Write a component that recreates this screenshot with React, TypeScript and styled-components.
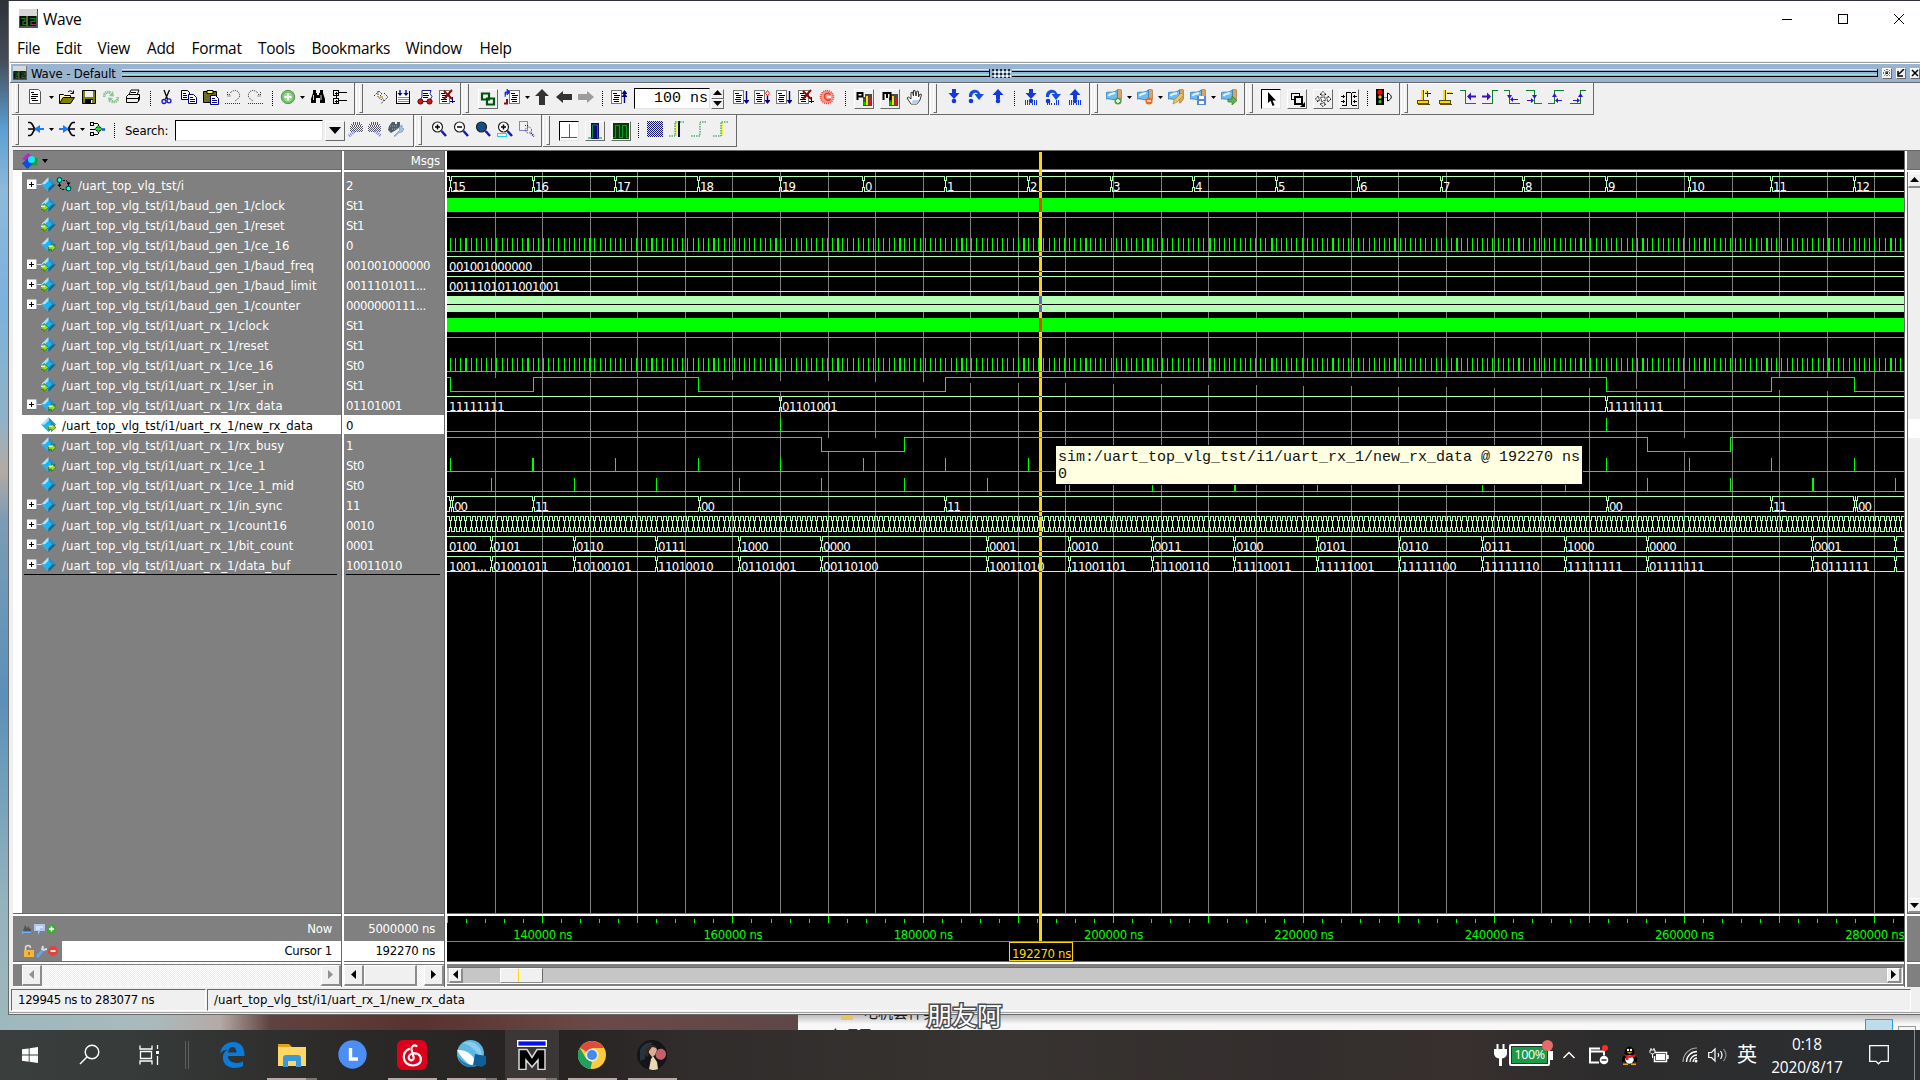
import { Fragment } from 'react'
import type { ReactNode } from 'react'
import styled, { createGlobalStyle, css } from 'styled-components'

const UI = `'DejaVu Sans Condensed', 'DejaVu Sans', sans-serif`
const SEGOE = `'Open Sans', 'Noto Sans', 'Noto Sans CJK SC', sans-serif`
const MONO = `'Liberation Mono', monospace`

const GlobalStyle = createGlobalStyle`
  * { box-sizing: border-box; }
  body { margin: 0; overflow: hidden; background: #2c2a29; }
  svg { display: block; flex: none; }
`

/* ---------- shell ---------- */

const Desktop = styled.div`
  width: 1920px;
  height: 1080px;
  display: flex;
  flex-direction: column;
  position: relative;
  overflow: hidden;
  background: linear-gradient(180deg, #2d3138 0, #454d5a 60px, #5d9fd2 130px, #8fb9da 190px, #7db2dc 300px, #8fb2c8 420px, #b5aaa4 470px, #7b9cb5 520px, #5c90b8 700px, #93b3bd 900px, #9db8bc 1014px);
`

const WindowFrame = styled.div`
  margin: 1px 0 0 8px;
  height: 1014px;
  flex: none;
  display: flex;
  flex-direction: column;
  background: #f0f0f0;
  border-left: 1px solid #696969;
  border-bottom: 1px solid #696969;
`

const TitleBar = styled.div`
  height: 35px;
  flex: none;
  display: flex;
  align-items: center;
  background: #fff;
  padding: 0 16px 0 10px;
  font: 15.5px ${SEGOE};
  letter-spacing: -0.2px;
  color: #000;
`

const TitleText = styled.span`
  margin-left: 5px;
  flex: 1;
`

const CaptionButtons = styled.div`
  display: flex;
  gap: 46px;
`

const MenuBar = styled.div`
  height: 25px;
  flex: none;
  display: flex;
  align-items: center;
  background: #fff;
  padding: 0 0 1px 8px;
  font: 15.4px ${SEGOE};
  letter-spacing: -0.28px;
`

const MenuItem = styled.span<{ $w: number }>`
  width: ${({ $w }) => $w}px;
  white-space: nowrap;
`

const DockBar = styled.div`
  height: 21px;
  flex: none;
  margin: 1px 0 0 1px;
  border-top: 1px solid #a0a0a0;
  border-bottom: 1px solid #696969;
  box-shadow: inset 0 1px #fff, inset 1px 0 #fff;
  background: #99b4d1;
  display: flex;
  align-items: center;
  padding: 1px 0 0 3px;
  font: 13px ${UI};
  letter-spacing: -0.12px;
`

const DockTitle = styled.span`
  margin: 0 6px 0 4px;
  width: 85px;
  white-space: nowrap;
`

const DockRail = styled.div<{ $w: number }>`
  width: ${({ $w }) => $w}px;
  height: 8px;
  border-right: 1px solid #000;
  background: linear-gradient(180deg, #c8f0f8 0 1px, #99b4d1 1px 2px, #000 2px 3px, #99b4d1 3px 5px, #a8dce8 5px 6px, #99b4d1 6px 7px, #000 7px 8px);
`

const DockGrip = styled.div`
  width: 19px;
  height: 9px;
  margin: 0 1px 0 2px;
  background-image: radial-gradient(circle at 1px 1px, #223 0.7px, transparent 0.9px), radial-gradient(circle at 3px 3px, #fff 0.7px, transparent 0.9px);
  background-size: 4px 4px;
`

const DockButtons = styled.div`
  display: flex;
  gap: 4px;
  margin-left: 4px;
`

const MiniButton = styled.div`
  width: 10px;
  height: 11px;
  flex: none;
  background: #f0f0f0;
  border: 1px solid #fff;
  border-right-color: #696969;
  border-bottom-color: #696969;
  display: flex;
  align-items: center;
  justify-content: center;
`

/* ---------- toolbars ---------- */

const ToolRow = styled.div`
  height: 32px;
  flex: none;
  display: flex;
  gap: 1px;
  padding-left: 3px;
`

const ToolGroup = styled.div<{ $w: number; $pad: number }>`
  width: ${({ $w }) => $w}px;
  flex: none;
  height: 32px;
  display: flex;
  align-items: center;
  border-right: 1px solid #696969;
  border-bottom: 1px solid #696969;
  box-shadow: inset 1px 1px #fff;

  &::before {
    content: '';
    flex: none;
    width: 2px;
    height: 28px;
    margin: 0 ${({ $pad }) => $pad}px 0 3px;
    border-left: 1px solid #fff;
    border-right: 1px solid #696969;
    border-bottom: 1px solid #696969;
  }
`

const Slot = styled.div<{ $w?: number }>`
  width: ${({ $w = 22 }) => $w}px;
  height: 16px;
  flex: none;
  margin-bottom: 3px;
  display: flex;
  align-items: center;
  justify-content: center;
`

const Dots = styled.div<{ $w?: number }>`
  width: 1px;
  height: 15px;
  flex: none;
  margin: 0 ${({ $w = 12 }) => ($w - 1) / 2}px;
  background: repeating-linear-gradient(180deg, #000 0 1px, transparent 1px 2px);
`

const PushButton = styled.div<{ $down?: boolean; $gap?: number }>`
  width: 20px;
  height: 20px;
  flex: none;
  margin-right: ${({ $gap = 6 }) => $gap}px;
  display: flex;
  align-items: center;
  justify-content: center;
  border: 1px solid #fff;
  border-right-color: #696969;
  border-bottom-color: #696969;
  ${({ $down }) => $down && css`
    background: #fff;
    border-color: #000 #e3e3e3 #e3e3e3 #000;
  `}
`

const Field = styled.div<{ $w: number }>`
  width: ${({ $w }) => $w}px;
  height: 21px;
  flex: none;
  background: #fff;
  border: 1px solid #000;
  border-right-color: #e3e3e3;
  border-bottom-color: #e3e3e3;
  font: 15px/20px ${MONO};
  text-align: right;
  padding-right: 1px;
`

const Spinner = styled.div`
  display: flex;
  flex-direction: column;
  margin: 0 6px 0 1px;
`

const SpinButton = styled.div`
  width: 13px;
  height: 10px;
  border: 1px solid #fff;
  border-right-color: #696969;
  border-bottom-color: #696969;
  display: flex;
  align-items: center;
  justify-content: center;
`

const SearchLabel = styled.span`
  width: 55px;
  padding-left: 5px;
  font: 13px ${UI};
  letter-spacing: -0.1px;
  white-space: nowrap;
`

/* ---------- panes ---------- */

const Panes = styled.div`
  margin: 3px 0 0 4px;
  height: 837px;
  flex: none;
  display: grid;
  grid-template-columns: 328px 3px 100px 3px 1457px 3px 13px;
  border-top: 1px solid #696969;
`

const Column = styled.div`
  display: flex;
  flex-direction: column;
  position: relative;
  min-width: 0;
`

const VSplit = styled.div`
  border-left: 1px solid #696969;
  background: #fff;
`

const HSplit = styled.div`
  height: 3px;
  flex: none;
  border-top: 1px solid #696969;
  background: #fff;
`

const PaneHeader = styled.div<{ $dark?: boolean }>`
  height: 18px;
  flex: none;
  background: ${({ $dark }) => ($dark ? '#000' : '#808080')};
  color: #fff;
  font: 13px/19px ${UI};
  letter-spacing: -0.1px;
  text-align: right;
  padding-right: 4px;
`

const HeaderIcon = styled.div`
  display: flex;
  align-items: center;
  gap: 4px;
  height: 19px;
  padding-left: 9px;
`

const PaneBody = styled.div<{ $gutter?: boolean; $dark?: boolean }>`
  height: 741px;
  flex: none;
  padding-top: 3px;
  background: ${({ $dark }) => ($dark ? '#000' : '#808080')};
  border-left: ${({ $gutter }) => ($gutter ? '9px solid #fff' : '0')};
  ${({ $dark }) => $dark && 'padding: 0;'}
`

const SignalRow = styled.div<{ $selected?: boolean }>`
  height: 20px;
  display: flex;
  align-items: center;
  background: ${({ $selected }) => ($selected ? '#fff' : 'transparent')};
  background-clip: content-box;
  padding-bottom: 1px;
  color: ${({ $selected }) => ($selected ? '#000' : '#fff')};
  font: 13px/19px ${UI};
  letter-spacing: 0.07px;
  white-space: nowrap;
`

const Expander = styled.div`
  width: 19px;
  height: 18px;
  flex: none;
  display: flex;
  align-items: center;
  padding-left: 5px;
`

const SignalIcon = styled.div`
  width: 15px;
  flex: none;
`

const SignalName = styled.span<{ $indent?: boolean }>`
  margin-left: ${({ $indent }) => ($indent ? 6 : 6)}px;
  padding-top: 1px;
`

const SignalValue = styled.span`
  padding: 1px 0 0 2px;
  letter-spacing: -0.45px;
`

const InsertLine = styled.div<{ $l: number; $r: number }>`
  height: 1px;
  margin: -1px ${({ $r }) => $r}px 0 ${({ $l }) => $l}px;
  background: #000;
`

const Footer = styled.div`
  height: 45px;
  flex: none;
  background: #808080;
  font: 13px ${UI};
  letter-spacing: -0.25px;
`

const FooterRow = styled.div<{ $h: number; $light?: boolean }>`
  height: ${({ $h }) => $h}px;
  display: flex;
  align-items: center;
  color: ${({ $light }) => ($light ? '#000' : '#fff')};
`

const FooterIcons = styled.div`
  width: 49px;
  padding-left: 9px;
  display: flex;
  flex: none;
`

const FooterCell = styled.div<{ $light?: boolean }>`
  flex: 1;
  height: 100%;
  display: flex;
  align-items: center;
  justify-content: flex-end;
  padding: 0 9px 1px 0;
  background: ${({ $light }) => ($light ? '#fff' : 'transparent')};
`

const ScrollStrip = styled.div<{ $l?: number }>`
  height: 23px;
  flex: none;
  display: flex;
  align-items: center;
  background: #808080;
  border-bottom: 1px solid #fff;
  padding-left: ${({ $l = 0 }) => $l}px;
`

const Trough = styled.div`
  flex: 1;
  height: 21px;
  background: repeating-conic-gradient(#fff 0 25%, #ececec 0 50%) 0 0 / 2px 2px;
`

const ScrollButton = styled.div<{ $w?: number; $h?: number }>`
  width: ${({ $w = 20 }) => $w}px;
  height: ${({ $h = 21 }) => $h}px;
  flex: none;
  background: #f0f0f0;
  border: 1px solid #fff;
  border-right: 2px solid #8c8c8c;
  border-bottom: 2px solid #8c8c8c;
  display: flex;
  align-items: center;
  justify-content: center;
`

const WaveTrough = styled.div`
  flex: 1;
  height: 17px;
  margin: 0 1px 0 0;
  border-top: 1px solid #696969;
  border-bottom: 1px solid #fff;
  border-right: 1px solid #fff;
  background: #c6c6c6;
  display: flex;
  align-items: center;
  padding: 0 1px 0 2px;
`

const WaveThumb = styled.div`
  width: 43px;
  height: 15px;
  margin: 0 auto 0 37px;
  background: #f0f0f0;
  border: 1px solid #fff;
  border-right-color: #696969;
  border-bottom-color: #8c8c8c;
  display: flex;
  padding-left: 17px;

  &::before {
    content: '';
    width: 1px;
    background: #ffd700;
  }
`

const CursorLine = styled.div`
  position: absolute;
  left: 592px;
  top: 1px;
  width: 3px;
  height: 789px;
  background: #ffd700;
`

const Crossing = styled.i<{ $top: number; $h: number; $c: string }>`
  position: absolute;
  left: 0;
  top: ${({ $top }) => $top}px;
  width: 3px;
  height: ${({ $h }) => $h}px;
  background: ${({ $c }) => $c};
`

const Tooltip = styled.div`
  position: absolute;
  left: 608px;
  top: 294px;
  width: 528px;
  height: 40px;
  border: 1px solid #000;
  background: #ffffe1;
  padding: 3px 0 0 2px;
  font: 15px/17px ${MONO};
  white-space: pre;
  color: #111;
`

const SideScroll = styled.div`
  height: 741px;
  flex: none;
  background: #efefef;
  border-left: 1px solid #696969;
  display: flex;
  flex-direction: column;
  justify-content: space-between;
  padding-top: 1px;
`

const SideThumb = styled.div`
  height: 19px;
  margin-bottom: 230px;
  background: #fff;
`

const SideBlock = styled.div<{ $h: number }>`
  height: ${({ $h }) => $h}px;
  flex: none;
  background: #808080;
`

const StatusBar = styled.div`
  height: 22px;
  flex: none;
  margin: 2px 0 0 2px;
  display: flex;
  gap: 1px;
  font: 13px ${UI};
`

const StatusCell = styled.div<{ $w: number; $track: number }>`
  width: ${({ $w }) => $w}px;
  display: flex;
  align-items: center;
  padding: 0 0 1px 6px;
  letter-spacing: ${({ $track }) => $track}px;
  border-top: 1px solid #696969;
  border-left: 1px solid #696969;
  border-right: 1px solid #fff;
  border-bottom: 1px solid #fff;
`

const FrameEdge = styled.div`
  height: 1px;
  margin-top: auto;
  margin-bottom: 1px;
  background: #a0a0a0;
`

/* ---------- behind the window, taskbar ---------- */

const Backdrop = styled.div`
  height: 15px;
  flex: none;
  display: flex;
  justify-content: flex-end;
  background: linear-gradient(90deg, #9db8bc 0, #a9babc 150px, #b5aaa6 220px, #5e4340 270px, #58332f 420px, #6a4a48 600px, #5d4747 798px);
`

const Explorer = styled.div`
  width: 1122px;
  height: 15px;
  overflow: hidden;
  background: linear-gradient(180deg, #bdbdbd, #f8f8f8 9px);
  position: relative;
  font: 15px/20px 'Noto Sans CJK SC', sans-serif;
  color: #1a1a1a;
`

const ExplorerFile = styled.div`
  height: 5px;
  padding-left: 43px;
  display: flex;
  align-items: flex-end;
  gap: 10px;
  overflow: hidden;
  line-height: 17px;
  white-space: nowrap;
`

const FileFolder = styled.div`
  width: 12px;
  height: 5px;
  background: #e8c36a;
`

const ExplorerStatus = styled.div`
  margin-top: 6px;
  padding-left: 18px;
  color: #1e395b;
  height: 6px;
  line-height: 18px;
`

const ViewSwitch = styled.div<{ $right: number; $w: number; $on?: boolean }>`
  position: absolute;
  right: ${({ $right }) => $right}px;
  top: ${({ $on }) => ($on ? 4 : 11)}px;
  width: ${({ $w }) => $w}px;
  height: 20px;
  background: ${({ $on }) => ($on ? '#c0dcea' : '#f4f4f4')};
  border: 1px solid ${({ $on }) => ($on ? '#26a0da' : '#999')};
`

const Subtitle = styled.div`
  position: absolute;
  left: 927px;
  top: 996px;
  font: 400 25px/36px 'Noto Sans CJK SC', sans-serif;
  color: #fff;
  -webkit-text-stroke: 3px #4c4c50;
  paint-order: stroke fill;
  white-space: nowrap;
`

const Taskbar = styled.div`
  height: 50px;
  flex: none;
  display: flex;
  justify-content: space-between;
  background: linear-gradient(90deg, #3a3e3d 0, #363a38 140px, #2b2a29 340px, #262322 560px, #2f2c2b 680px, #373331 1000px, #332e2d 1300px, #37302f 1460px, #2d2c2c 1600px, #2a2e31 1920px);
`

const TaskSide = styled.div`
  display: flex;
`

const TaskButton = styled.div<{ $w?: number; $active?: boolean }>`
  width: ${({ $w = 60 }) => $w}px;
  display: flex;
  flex-direction: column;
  align-items: center;
  justify-content: space-between;
  background: ${({ $active }) => ($active ? '#3a3736' : 'transparent')};
  background-clip: padding-box;
  border: 0 solid transparent;
  border-width: 0 3px;
`

const TaskIcon = styled.div`
  height: 48px;
  display: flex;
  align-items: center;
  padding-top: 1px;
`

const Running = styled.div<{ $stack?: boolean }>`
  height: 2px;
  width: ${({ $stack }) => ($stack ? 50 : 49)}px;
  background: ${({ $stack }) => ($stack ? 'linear-gradient(90deg, #b5aaa7 0 39px, #7c7472 39px)' : '#b5aaa7')};
`

const Divider = styled.div`
  width: 4px;
  height: 28px;
  margin: 11px 13px 0 6px;
  border: 1px solid #5d5f5f;
  border-width: 0 1px;
`

const TrayIcon = styled.div<{ $w: number }>`
  width: ${({ $w }) => $w}px;
  display: flex;
  align-items: center;
  justify-content: center;
  height: 50px;
`

const BatterySlot = styled(TrayIcon)`
  justify-content: flex-start;
  padding-left: 2px;
`

const ImeLabel = styled(TrayIcon)`
  font: 20px/1 'Noto Sans CJK SC', sans-serif;
  color: #fff;
  padding-bottom: 3px;
`

const Clock = styled.div`
  width: 94px;
  padding: 3px 0 0;
  text-align: center;
  color: #fff;
  font: 15.4px/23px ${SEGOE};
  letter-spacing: -0.15px;
`

const ShowDesktop = styled.div`
  width: 6px;
  margin-left: 10px;
  border-left: 1px solid #8a8a8a;
`

/* ---------- icons ---------- */

const Icon = ({ w = 16, h = 16, box, children }: { w?: number; h?: number; box?: string; children: ReactNode }) => (
  <svg width={w} height={h} viewBox={box ?? `0 0 ${w} ${h}`} fill="none">{children}</svg>
)

const Px = ({ d, c = '#000' }: { d: string; c?: string }) => (
  <path d={d} stroke={c} strokeWidth="1" shapeRendering="crispEdges" />
)

const Tri = ({ dir, c = '#000' }: { dir: 'up' | 'down' | 'left' | 'right'; c?: string }) => {
  const d = { up: 'M0 6h9L4.500 1z', down: 'M0 2h9L4.500 7z', left: 'M7 0v9L2 4.500z', right: 'M2 0v9L7 4.500z' }[dir]
  return <Icon w={9} h={9}><path d={d} fill={c} /></Icon>
}

const Caret = ({ w = 10 }: { w?: number }) => (
  <Slot $w={w}><Icon w={5} h={4}><path d="M0 1h5L2.500 4z" fill="#000" /></Icon></Slot>
)

const AppLogo = ({ s = 19 }: { s?: number }) => (
  <Icon w={s} h={s} box="0 0 19 19">
    <path d="M0 0h19v19H0z" fill="#555" />
    <path d="M0 0h18v7H0z" fill="#d8d8d8" />
    <path d="M1 7h16v10H1z" fill="#04100a" />
    <path d="M2 9.500h4v3h-2v3h3M11 9.500h5v3h-4v3h5" stroke="#14801f" strokeWidth="1.200" />
    <path d="M8 7v10" stroke="#b8b83c" />
    <path d="M12 15.500h4" stroke="#b03050" />
  </Icon>
)

const Doc = ({ x = 0 }: { x?: number }) => (
  <g transform={`translate(${x} 0)`} shapeRendering="crispEdges">
    <path d="M.5 1.500h10v13H.5z" fill="#fff" stroke="#777" />
    <path d="M2 4.500h4M3 6.500h6M3 8.500h5M2 10.500h6M3 12.500h5" stroke="#000" />
  </g>
)

const NewIcon = () => (
  <Icon>
    <path d="M2.500.500h9l2 2v12h-11z" fill="#fff" stroke="#555" />
    <Px d="M4 3.500h3M5 5.500h6M4 7.500h7M4 9.500h5M5 11.500h6" />
  </Icon>
)
const OpenIcon = () => (
  <Icon>
    <path d="M.5 14V5.500h4l1 1h6V9" fill="#ffff9a" stroke="#000" />
    <path d="M.5 14.500l3.500-6h11.500l-4 6z" fill="#808000" stroke="#000" />
    <path d="M9 3c2-2 4-1 5 1M14.500 1.500V4.500H11.500" stroke="#000" />
  </Icon>
)
const SaveIcon = () => (
  <Icon>
    <path d="M1.500 1.500h13v13h-13z" fill="#808000" stroke="#000" />
    <path d="M4 2h8v6H4z" fill="#efefef" />
    <path d="M4 10h8v4H4z" fill="#000" />
    <path d="M10 11h1.500v3H10z" fill="#fff" />
  </Icon>
)
const RefreshIcon = () => (
  <Icon>
    <g stroke="#8cc792" strokeWidth="3" strokeDasharray="1.500 .5">
      <path d="M1 8c0-4 3-6 7-4M15 8c0 4-3 6-7 4" />
    </g>
    <path d="M6 7l5 .5L10 2zM10 9l-5-.5L6 14z" fill="#8cc792" />
  </Icon>
)
const PrintIcon = () => (
  <Icon>
    <path d="M4 6l2-5h8l-2 5" fill="#fff" stroke="#000" />
    <path d="M1.500 7.500l2-2h11v5l-2 3h-11z" fill="#eee" stroke="#000" />
    <Px d="M6 3.500h5M6 5.500h5M2 9.500h11M3 13.500h8M13.500 8v4" />
  </Icon>
)
const CutIcon = () => (
  <Icon>
    <path d="M5 1l3.500 9M10.500 1L6.500 10" stroke="#000" strokeWidth="1.300" />
    <circle cx="5" cy="12.500" r="2" stroke="#1515d0" strokeWidth="1.300" />
    <circle cx="10" cy="11.800" r="2" stroke="#1515d0" strokeWidth="1.300" />
  </Icon>
)
const CopyIcon = () => (
  <Icon>
    <path d="M.5 1.500h6l2 2v7h-8z" fill="#fff" stroke="#000" />
    <path d="M7.500 5.500h5l3 3v6h-8z" fill="#fff" stroke="#000080" />
    <Px d="M2 4.500h3M2 6.500h4M2 8.500h4" />
    <Px d="M9 8.500h3M9 10.500h5M9 12.500h5" c="#000080" />
  </Icon>
)
const PasteIcon = () => (
  <Icon>
    <path d="M.5 2.500h13v11H.5z" fill="#6b6b28" stroke="#000" />
    <path d="M4 1.500h6v3H4z" fill="#ffff40" stroke="#000" />
    <path d="M7.500 6.500h5l3 3v6h-8z" fill="#fff" stroke="#000080" />
    <Px d="M9 9.500h3M9 11.500h5M9 13.500h5" c="#000080" />
  </Icon>
)
const UndoIcon = ({ flip }: { flip?: boolean }) => (
  <Icon>
    <g transform={flip ? 'translate(16 0) scale(-1 1)' : undefined} stroke="#333" strokeDasharray="1 1">
      <path d="M2.500 3v4h4M4 6C6 1 12 0 14 4s-1 6-4 8M0 14.500h15" />
    </g>
  </Icon>
)
const AddIcon = () => (
  <Icon>
    <circle cx="8" cy="8" r="6.700" fill="#76bf6c" stroke="#4f9a48" />
    <circle cx="8" cy="8" r="4.600" fill="#9bd592" />
    <path d="M8 4.500v7M4.500 8h7" stroke="#fff" strokeWidth="2.200" />
  </Icon>
)
const Binoculars = () => (
  <Icon>
    <path d="M3 1h3v3h1v2h2V4h1V1h3v3l2 6v4h-5V9H6v5H1v-4l2-6z" fill="#000" />
    <path d="M3.500 6v5M11 6v5" stroke="#fff" strokeWidth=".8" />
  </Icon>
)
const FindIcon = ({ next }: { next?: boolean }) => (
  <Icon>
    <g stroke="#55586a" strokeDasharray="1 1" shapeRendering="crispEdges">
      {range(10).map((k) => {
        const inset = [3, 2, 1, 1, 0, 0, 0, 0, 0, 0][k]
        return <path key={k} d={`M${2 + inset + (k % 2)} ${k + 1.500}H${15 - inset}`} />
      })}
    </g>
    <path d={next ? 'M9 10l6 5' : 'M1 15l6-5'} stroke="#6a74f0" strokeWidth="3" strokeDasharray="1 1" />
  </Icon>
)
const TreeIcon = () => (
  <Icon><Px d="M1.500 1.500h5v5h-5zM1.500 9.500h5v5h-5zM3 4.500h3M4.500 3v3M3 12.500h3M4.500 11v3M7 3.500h8M7 11.500h8M4.500 7v2" /></Icon>
)
const CompileIcon = () => (
  <Icon>
    <path d="M1 7l5-5 3 3-2 2 4 4-3 4M11 4l4 4-4 4M5 2v6l4 3" stroke="#333" strokeDasharray="1.500 1" />
    <path d="M7 7h3v2H7z" fill="#c8b878" />
  </Icon>
)
const CompileAllIcon = () => (
  <Icon>
    <path d="M1 5h14v10H1z" fill="#fff" />
    <Px d="M1.500 2v12M14.500 2v12M1 14.500h14" />
    <Px d="M3 8.500h11M3 10.500h11M3 12.500h11" c="#888" />
    <path d="M5 1v5M11 1v5" stroke="#00008b" strokeWidth="1.300" /><path d="M2.500 4h5L5 7zM8.500 4h5L11 7z" fill="#00008b" />
  </Icon>
)
const SimulateIcon = () => (
  <Icon>
    <path d="M5 1.500h9l-1 3 2 3-3 5H3l2-5z" fill="#fff" stroke="#222088" />
    <Px d="M6 4.500h5M6 6.500h6M6 8.500h5" />
    <circle cx="3.500" cy="12.500" r="2.600" fill="#d01818" stroke="#600" /><circle cx="12.500" cy="12.500" r="2.600" fill="#d01818" stroke="#600" />
  </Icon>
)
const BreakDocIcon = () => (
  <Icon>
    <Doc />
    <Px d="M13.500 8v6M11 12.500h5" c="#00008b" />
    <path d="M5 2l8 8M13 1L5 10" stroke="#8b0a0a" strokeWidth="2" />
  </Icon>
)
const DocArrow = ({ up, open }: { up?: boolean; open?: boolean }) => (
  <Icon>
    <Doc />
    <path d="M13.500 2v12" stroke="#00008b" strokeWidth="1.400" />
    {up && <path d="M10.500 5l3-4 3 4zM10.500 8l3-4 3 4z" fill="#00008b" />}
    {!up && <path d="M10.500 11l3 4 3-4z" fill="#00008b" />}
    {open && <path d="M11.500 4.500l2-3 2 3-2 2z" fill="#fff" stroke="#e03030" />}
  </Icon>
)
const LinkIcon = () => (
  <Icon>
    <path d="M2 2.500h7v6H2zM7 7.500h7v6H7z" stroke="#00520f" strokeWidth="2.200" />
  </Icon>
)
const RestartIcon = () => (
  <Icon>
    <Doc x={5} />
    <path d="M0 14.500h3V10" stroke="#7a1010" strokeWidth="2" />
    <path d="M1 8V3h2M3 0l3 3-3 3z" stroke="#1a2ae0" fill="#1a2ae0" strokeWidth=".8" />
  </Icon>
)
const BlockArrow = ({ dir }: { dir: 'up' | 'left' | 'right' }) => (
  <Icon>
    <path
      d={dir === 'up' ? 'M8 0l7 7h-4v9H5V7H1z' : dir === 'left' ? 'M0 8l7-6v3h9v6H7v3z' : 'M16 8l-7-6v3H0v6h9v3z'}
      fill={dir === 'right' ? '#9c9c9c' : '#333'}
    />
  </Icon>
)
const StopIcon = () => (
  <Icon>
    <circle cx="8" cy="8" r="6.500" fill="#fa9a8e" stroke="#e63b2c" strokeWidth="1.500" strokeDasharray="1 1" />
    <path d="M11.500 5.500C8 3 5 5 5.500 8s4 4.500 6 2" stroke="#e63b2c" strokeWidth="1.500" />
    <path d="M12 8H8" stroke="#fff" strokeWidth="1.500" />
  </Icon>
)
const BarsIcon = ({ letter }: { letter: 'P' | 'M' }) => (
  <Icon>
    <path d="M7 6h2V3h7v12H7z" fill="#4a4a4a" />
    <path d="M7.500 11h2v3h-2z" fill="#0c0" /><path d="M10 5h2v9h-2z" fill="#fd0" /><path d="M13 7h2v7h-2z" fill="#e11" />
    <path d={letter === 'P' ? 'M1.500 9V2h5v3.500H2' : 'M1.500 9V2h7v7M5 2v5'} stroke="#000" strokeWidth="2" />
  </Icon>
)
const HandIcon = () => (
  <Icon>
    <path d="M5 15l-4-6 1.500-1L5 10V3.500L6.500 3 7.500 7V1.500h1.500L10 7l1-5 1.500.5V8l1.500-3 1.500.5L14 11l-3 4z" fill="#fff" stroke="#222" strokeWidth=".9" />
    <path d="M5 15l2-4h6l-2 4z" fill="#bcd0ee" />
  </Icon>
)
const StepIcon = ({ kind, lines }: { kind: 'in' | 'over' | 'out'; lines?: boolean }) => (
  <Icon h={18}>
    {kind === 'in' && <path d="M6 1h4v4h3.500L8 11 2.500 5H6z" fill="#1438dc" />}
    {kind === 'out' && <path d="M8 1l5.500 6H10v4H6V7H2.500z" fill="#1438dc" />}
    {kind === 'over' && <path d="M1 9C0 1 10-1 12.500 6H16l-5 6-4.500-6H10C8 3.500 4 5 4 9z" fill="#1450dc" />}
    <circle cx={kind === 'over' ? 3 : 8} cy="13" r="2.300" fill="#1438dc" />
    {lines && <Px d="M2.500 12v5M4.500 12v5M11.500 12v5M13.500 12v5M6.500 15v2M9.500 15v2" c="#1438dc" />}
  </Icon>
)
const BookmarkIcon = ({ badge }: { badge: 'add' | 'del' | 'edit' | 'save' | 'go' }) => (
  <Icon>
    <path d="M11 1l3-1 1.500 1v9l-3 4h-1z" fill="#d9a566" stroke="#9a6a30" strokeWidth=".6" />
    <path d="M.5 3.500c4-1 6 1 11-2.500v9c-5 2-7-1-11.500 0z" fill="#6fbcf0" stroke="#3b86c4" />
    <path d="M2.500 7c1-2 3-2 6.500-3" stroke="#e4f5ff" strokeWidth="2" />
    {badge === 'add' && <><circle cx="12" cy="12" r="3.600" fill="#5b9c48" /><path d="M12 10v4M10 12h4" stroke="#fff" strokeWidth="1.300" /></>}
    {badge === 'del' && <><circle cx="12" cy="12" r="3.600" fill="#f06a1c" /><path d="M10 12h4" stroke="#fff" strokeWidth="1.300" /></>}
    {badge === 'edit' && <path d="M5 15l1-4 7-7 3 2-7 7z" fill="#ecc162" stroke="#b78a34" strokeWidth=".8" />}
    {badge === 'save' && <><path d="M7 7h9v9H7z" fill="#5a84d8" /><path d="M9 7h5v3H9zM9 12h5v3H9z" fill="#fff" /></>}
    {badge === 'go' && <path d="M7 10h4V7l5 4.500-5 4.500v-3H7z" fill="#62b152" stroke="#2f7a28" strokeWidth=".7" />}
  </Icon>
)
const PointerIcon = () => (
  <Icon><path d="M5 1v11l2.600-2.200L9.500 15l2-1-2-4.500H13z" fill="#000" /></Icon>
)
const ZoomBoxIcon = () => (
  <Icon><path d="M6 6h7v7H6z" stroke="#000" strokeWidth="2" /><Px d="M5 8.500H2.500v-6h8V5" /><path d="M16 11v5h-5z" fill="#000" /></Icon>
)
const PanIcon = () => (
  <Icon><path d="M8 .5l3 3H9v3.500h4V5l3 3-3 3V9H9v4h2l-3 2.500L5 13h2V9H3v2L.5 8 3 5v2h4V3.500H5z" stroke="#000" strokeDasharray="1.300 .7" fill="#fff" /></Icon>
)
const EditWaveIcon = () => (
  <Icon><Px d="M5 1.500h5M5.500 2v12M1 14.500h5M10.500 2v12M11 14.500h5M11 1.500h4M0 5.500h4M0 10.500h4M12 5.500h4M12 10.500h4M2.500 4v3M2.500 9v3M13.500 4v3M13.500 9v3" /></Icon>
)
const TrafficIcon = () => (
  <Icon>
    <path d="M0 0h8v16H0z" fill="#000" />
    <circle cx="4" cy="3.200" r="2.600" fill="#f00" /><circle cx="4" cy="8" r="1.700" fill="#cc3" /><circle cx="4" cy="12.800" r="1.700" fill="#2c2" />
    <path d="M11.500 4v8c5-2 5-6 0-8z" fill="#fff" stroke="#000" /><Px d="M8 8.500h3" c="#88c" />
  </Icon>
)
const CursorToolIcon = ({ minus }: { minus?: boolean }) => (
  <Icon>
    <path d="M6.500 1v10M1 12.500h11M1 14h11" stroke="#ffd800" strokeWidth="2.500" />
    <Px d="M7.500 1v10M2 15.500h12M1.500 11.500h11v3h-11z" c="#5b4b00" />
    <Px d={minus ? 'M9 4.500h6' : 'M9 4.500h6M11.500 2v6'} c="#2c2400" />
    <Px d={minus ? 'M9 3.500h5' : 'M9 3.500h2M10.500 1v2'} c="#ffd800" />
  </Icon>
)
const EdgeIcon = ({ d, arrow }: { d: string; arrow: string }) => (
  <Icon><Px d={d} c="#0a8030" /><path d={arrow} fill="#3a10c8" /></Icon>
)
const MergeIcon = ({ right }: { right?: boolean }) => (
  <Icon>
    <g transform={right ? 'translate(16 0) scale(-1 1)' : undefined}>
      <path d="M0 1.500h2c3 0 3 6.500 6 6.500M0 14.500h2c3 0 3-6.500 6-6.500M0 8h7" stroke="#000" strokeWidth="1.700" />
    </g>
    <path d={right ? 'M0 7h4V4l6 4-6 4V9H0z' : 'M16 7h-4V4L6 8l6 4V9h4z'} fill="#1a7cf5" />
  </Icon>
)
const ExpandNetIcon = () => (
  <Icon>
    <Px d="M.5 1.500h3v3h-3zM.5 11.500h3v3h-3zM4 2.500h4M4 13.500h4M8.500 3v10M0 8.500h5" />
    <path d="M4.500 8l4-4 4 4-4 4z" fill="#111" /><path d="M8.500 5v6M5.500 8h6" stroke="#2d3" strokeWidth="2" />
    <path d="M12 8.500h3" stroke="#1a50f5" strokeWidth="2.500" />
  </Icon>
)
const WrenchIcon = () => (
  <Icon>
    <path d="M1 5l3-4h3v2h2V1h3v5l-4 3-5 3-3-3z" fill="#4f5b66" /><path d="M2 5h8M4 8h5" stroke="#9ab" strokeDasharray="1 1" />
    <path d="M6 15l6-6-1-3 3-2v3l2 1-2 3-3 .5-4 4z" fill="#a9c3e6" stroke="#6f8fbc" strokeWidth=".7" />
  </Icon>
)
const Magnifier = ({ sign, fill = '#fff' }: { sign?: 'plus' | 'minus' | 'bar'; fill?: string }) => (
  <Icon>
    <circle cx="6.500" cy="6" r="5" fill={fill} stroke="#222" strokeWidth="1.200" />
    {sign && <path d="M4 6h5" stroke="#000" strokeWidth="1.500" />}
    {(sign === 'plus' || sign === 'bar') && <path d="M6.500 3.500v5" stroke="#000" strokeWidth="1.500" />}
    <path d="M10.500 10l4.500 5" stroke="#1616b8" strokeWidth="2.500" />
    {sign === 'bar' && <Px d="M.5 12.500h9v3h-9zM6.500 0v2M6.500 10v2" c="#18d8e8" />}
  </Icon>
)
const ZoomRangeIcon = () => (
  <Icon>
    <path d="M.5.500h8v9h-8zM6 4.500h4" stroke="#1616b8" strokeDasharray="1 1" />
    <circle cx="9.500" cy="9" r="3" stroke="#555" strokeDasharray="1.500 1" /><path d="M12 12l3 3.500" stroke="#1616b8" strokeWidth="2" strokeDasharray="1 1" />
  </Icon>
)
const WaveShape = ({ d, bg, line }: { d: string; bg?: string; line?: string }) => (
  <Icon>
    {bg && <path d={bg} fill="#0a0a78" />}
    {line && <path d={line} stroke="#f4f43a" strokeWidth="2" />}
    <path d={d} stroke="#0a8a3a" strokeDasharray={line || !bg ? '1.500 1' : undefined} />
  </Icon>
)
const CheckerIcon = () => (
  <Icon>
    <path d="M0 0h16v16H0z" fill="#d8dcec" />
    <g stroke="#16167c" strokeDasharray="1 1" shapeRendering="crispEdges">
      {range(16).map((k) => <path key={k} d={`M${k % 2} ${k + 0.5}H16`} />)}
    </g>
  </Icon>
)

const SignalGlyph = ({ dir }: { dir?: 'in' | 'out' }) => (
  <Icon w={15} h={15}>
    <path d="M7.500 0L15 7.500H7.500z" fill="#1f93d0" />
    <path d="M7.500 0v7.500H0z" fill="#a5e4fb" />
    <path d="M0 7.500h7.500V15z" fill="#27b2ec" />
    <path d="M15 7.500L7.500 15V7.500z" fill="#096a96" />
    <path d="M7.500 3.800l3.700 3.700-3.700 3.700-3.700-3.700z" fill="#10b8f4" />
    {dir === 'in' && <path d="M0 8.800h3V6.500l4.500 4-4.500 4v-2.200H0z" fill="#8fe01c" stroke="#3a6a10" strokeWidth=".7" />}
    {dir === 'in' && <path d="M0 9.200h4" stroke="#f4ffd8" strokeWidth="1.300" />}
    {dir === 'out' && <path d="M7.500 8.800h3V6.500l4.500 4-4.500 4v-2.200h-3z" fill="#8fe01c" stroke="#3a6a10" strokeWidth=".7" />}
    {dir === 'out' && <path d="M7.500 9.200h4" stroke="#f4ffd8" strokeWidth="1.300" />}
  </Icon>
)
const PlusBox = () => (
  <Icon w={15} h={11}>
    <path d="M0 1h10v9.500H0z" fill="#5b6480" />
    <path d="M0 .5h9.500V10H0z" fill="#fff" />
    <Px d="M2 5.500h5M4.500 3v5" />
    <Px d="M10 5.500h5" c="#ddd" />
  </Icon>
)
const ProcessIcon = () => (
  <Icon w={16} h={15}>
    <path d="M3.500 5v5l2 2.500h4M7 3.500h3l2.500 2V9" stroke="#000" strokeDasharray="2 1" />
    <circle cx="3.500" cy="3" r="2.400" fill="#0fe" stroke="#000" strokeWidth=".8" /><circle cx="12.500" cy="11.500" r="2.400" fill="#0fe" stroke="#000" strokeWidth=".8" />
    <path d="M1.500 9h4l-2-3zM10.500 5.500h4l-2 3z" fill="#000" />
  </Icon>
)
const ShapesIcon = () => (
  <Icon w={16} h={16}>
    <path d="M0 6l6-6 5 4-5 4z" fill="#b428c8" /><path d="M7 5h8.500v7.500H7z" fill="#18a03c" />
    <path d="M5.500 5.500l5.500 5-5.500 5.500L0 10.500z" fill="#0a4fe0" /><circle cx="9.500" cy="6.500" r="3.500" fill="#19e6f0" />
  </Icon>
)

/* ---------- signal data ---------- */

const T0 = 129945
const SCALE = 1457 / (283077 - T0)
const xAt = (t: number) => (t - T0) * SCALE

// bit boundaries and bit centres, in pane pixels
const PITCH = 82.57
const bit = (k: number) => Math.round(3 + PITCH * k)
const mid = (k: number) => Math.round(44.1 + PITCH * k)
const STEP = PITCH / 16

type Signal = { name: string; value: string; dir?: 'in' | 'out'; plus?: boolean; process?: boolean; selected?: boolean }

const BG = '/uart_top_vlg_tst/i1/baud_gen_1/'
const RX = '/uart_top_vlg_tst/i1/uart_rx_1/'

const signals: Signal[] = [
  { name: '/uart_top_vlg_tst/i', value: '2', plus: true, process: true },
  { name: `${BG}clock`, value: 'St1', dir: 'in' },
  { name: `${BG}reset`, value: 'St1', dir: 'in' },
  { name: `${BG}ce_16`, value: '0', dir: 'out' },
  { name: `${BG}baud_freq`, value: '001001000000', dir: 'in', plus: true },
  { name: `${BG}baud_limit`, value: '0011101011...', dir: 'in', plus: true },
  { name: `${BG}counter`, value: '0000000111...', plus: true },
  { name: `${RX}clock`, value: 'St1', dir: 'in' },
  { name: `${RX}reset`, value: 'St1', dir: 'in' },
  { name: `${RX}ce_16`, value: 'St0', dir: 'in' },
  { name: `${RX}ser_in`, value: 'St1', dir: 'in' },
  { name: `${RX}rx_data`, value: '01101001', dir: 'out', plus: true },
  { name: `${RX}new_rx_data`, value: '0', dir: 'out', selected: true },
  { name: `${RX}rx_busy`, value: '1', dir: 'out' },
  { name: `${RX}ce_1`, value: 'St0', dir: 'out' },
  { name: `${RX}ce_1_mid`, value: 'St0' },
  { name: `${RX}in_sync`, value: '11', plus: true },
  { name: `${RX}count16`, value: '0010', plus: true },
  { name: `${RX}bit_count`, value: '0001', plus: true },
  { name: `${RX}data_buf`, value: '10011010', plus: true },
]

const W = 1457
const GREEN = '#00ff00'
const PALE = '#b4ffb4'

const Bus = ({ row, marks, first }: { row: number; marks: [number, string][]; first?: string }) => {
  const t = row * 20 + 4
  const b = t + 15
  let d = ''
  let from = 0
  marks.forEach(([x]) => {
    d += `M${from} ${t + 0.5}H${x}M${from} ${b + 0.5}H${x}`
    d += `M${x - 0.5} ${t}v5M${x + 1.5} ${t}v5M${x + 0.5} ${t + 4}V${b - 3}M${x - 0.5} ${b - 4}V${b + 1}M${x + 1.5} ${b - 4}V${b + 1}`
    from = x + 1
  })
  d += `M${from} ${t + 0.5}H${W}M${from} ${b + 0.5}H${W}`
  const labels: [number, string][] = first ? [[0, first], ...marks] : marks
  return (
    <>
      <Px d={d} c={PALE} />
      {labels.filter(([, s]) => s).map(([x, s]) => (
        <text key={x} x={x + 2} y={t + 14.500} fill="#fff" textLength={s.includes('...') ? 38 : s.length * 6.950}>{s}</text>
      ))}
    </>
  )
}

const Level = ({ row, start, edges }: { row: number; start: boolean; edges: number[] }) => {
  const hi = row * 20 + 5.500
  const lo = row * 20 + 19.500
  let on = start
  let d = `M0 ${on ? hi : lo}`
  edges.forEach((x) => {
    d += `H${x + 0.5}`
    on = !on
    d += `V${on ? hi : lo}`
  })
  return <Px d={`${d}H${W}`} c={GREEN} />
}

const Pulses = ({ row, at }: { row: number; at: number[] }) => (
  <Px
    d={`M0 ${row * 20 + 19.500}H${W}` + at.map((x) => `M${x + 0.5} ${row * 20 + 6}v13`).join('')}
    c={GREEN}
  />
)

function range(n: number) {
  return Array.from({ length: n }, (_, i) => i)
}

const ticks16 = range(283).map((k) => Math.round(3 + STEP * k))
const wide16 = ticks16.filter((_, k) => k % 6 === 3 && k % 4 !== 1)
const bits = range(18).map(bit)
const mids = range(18).map(mid)

const counts = ['15', '16', '17', '18', '19', '0', '1', '2', '3', '4', '5', '6', '7', '8', '9', '10', '11', '12']
const bitCount = ['0101', '0110', '0111', '1000', '0000', null, '0001', '0010', '0011', '0100', '0101', '0110', '0111', '1000', '0000', null, '0001', '']
const dataBuf = ['01001011', '10100101', '11010010', '01101001', '00110100', null, '10011010', '11001101', '11100110', '11110011', '11111001', '11111100', '11111110', '11111111', '01111111', null, '10111111', '']

const toMarks = (labels: (string | null)[], xs: number[]) =>
  labels.map((s, k) => [xs[k], s] as [number, string | null]).filter(([, s]) => s !== null) as [number, string][]

const Waveforms = () => (
  <svg width={W} height={741} fontFamily={UI} fontSize={13}>
    <Px c="#808080" d={range(30).map((k) => `M${Math.floor(xAt(135000 + k * 5000)) + 0.5} 0V741`).join('')} />
    {[1, 7].map((r) => <rect key={r} x={0} y={r * 20 + 6} width={W} height={14} fill={GREEN} />)}
    {[2, 8].map((r) => <Level key={r} row={r} start edges={[]} />)}
    {[3, 9].map((r) => (
      <Fragment key={r}>
        <Pulses row={r} at={ticks16} />
        <Pulses row={r} at={wide16.map((x) => x + 1)} />
      </Fragment>
    ))}
    <rect x={0} y={124} width={W} height={8} fill={PALE} />
    <rect x={0} y={132} width={W} height={1} fill="#000" />
    <rect x={0} y={133} width={W} height={7} fill={PALE} />
    <Level row={10} start edges={[bits[0], bits[1], bits[3], bits[6], bits[14], bits[16], bits[17]]} />
    <Pulses row={12} at={[bits[4], bits[14]]} />
    <Level row={13} start edges={[mids[4], mids[5], mids[14], mids[15]]} />
    <Pulses row={14} at={[...bits, bits[1] - 1]} />
    <Pulses row={15} at={[...mids, mids[9] + 1, mids[16] + 1]} />
    <Bus row={0} marks={toMarks(counts, bits)} />
    <Bus row={4} marks={[]} first="001001000000" />
    <Bus row={5} marks={[]} first="0011101011001001" />
    <Bus row={11} first="11111111" marks={[[bits[4], '01101001'], [bits[14], '11111111']]} />
    <Bus
      row={16}
      marks={[[bits[0], ''], [bits[0] + 2, '00'], [bits[1], '11'], [bits[3] + 1, '00'], [bits[6], '11'], [bits[14] + 1, '00'], [bits[16], '11'], [bits[17], ''], [bits[17] + 2, '00']]}
    />
    <Bus row={17} marks={ticks16.map((x) => [x, ''])} />
    <Bus row={18} first="0100" marks={toMarks(bitCount, mids)} />
    <Bus row={19} first="1001..." marks={toMarks(dataBuf, mids)} />
  </svg>
)

const Timeline = () => (
  <svg width={W} height={45} fontFamily={UI} fontSize={13}>
    <rect width={W} height={45} fill="#000" />
    <Px
      c={GREEN}
      d={range(77).map((k) => {
        const t = 130000 + k * 2000
        const x = Math.floor(xAt(t)) + 0.5
        return t % 10000 === 0 ? `M${x} 0v7` : `M${x} 3v4`
      }).join('')}
    />
    {range(8).map((k) => (
      <text key={k} x={xAt(140000 + k * 20000) - 29.500} y={23} fill={GREEN} textLength={59}>{140000 + k * 20000} ns</text>
    ))}
    <Px d={`M0 25.500H${W}`} c="#808080" />
    <rect x={562.500} y={26.500} width={63} height={18} stroke="#ffd700" fill="#000" />
    <text x={565} y={42} fill="#ffd700" textLength={59}>192270 ns</text>
  </svg>
)

const menu: [string, number][] = [
  ['File', 38.500], ['Edit', 42], ['View', 49.500], ['Add', 44.500], ['Format', 66.500], ['Tools', 53.500], ['Bookmarks', 94], ['Window', 74], ['Help', 50],
]

const Toolbars = () => (
  <>
    <ToolRow>
      <ToolGroup $w={343} $pad={5}>
        <Slot><NewIcon /></Slot><Caret />
        <Slot><OpenIcon /></Slot>
        <Slot><SaveIcon /></Slot>
        <Slot><RefreshIcon /></Slot>
        <Slot><PrintIcon /></Slot>
        <Dots />
        <Slot><CutIcon /></Slot>
        <Slot><CopyIcon /></Slot>
        <Slot><PasteIcon /></Slot>
        <Slot><UndoIcon /></Slot>
        <Slot><UndoIcon flip /></Slot>
        <Dots />
        <Slot $w={19}><AddIcon /></Slot><Caret />
        <Slot><Binoculars /></Slot>
        <Slot><TreeIcon /></Slot>
      </ToolGroup>
      <ToolGroup $w={105} $pad={7}>
        <Slot><CompileIcon /></Slot>
        <Slot><CompileAllIcon /></Slot>
        <Slot><SimulateIcon /></Slot>
        <Slot><BreakDocIcon /></Slot>
      </ToolGroup>
      <ToolGroup $w={467} $pad={9}>
        <PushButton $gap={3}><LinkIcon /></PushButton>
        <Slot><RestartIcon /></Slot><Caret w={8} />
        <Slot><BlockArrow dir="up" /></Slot>
        <Slot><BlockArrow dir="left" /></Slot>
        <Slot><BlockArrow dir="right" /></Slot>
        <Dots $w={11} />
        <Slot><DocArrow up /></Slot>
        <Slot $w={4} />
        <Field $w={76}>100 ns</Field>
        <Spinner>
          <SpinButton><Tri dir="up" /></SpinButton>
          <SpinButton><Tri dir="down" /></SpinButton>
        </Spinner>
        <Slot $w={21}><DocArrow /></Slot>
        <Slot><DocArrow open /></Slot>
        <Slot><DocArrow /></Slot>
        <Slot><BreakDocIcon /></Slot>
        <Slot $w={20}><StopIcon /></Slot>
        <Dots $w={17} />
        <PushButton><BarsIcon letter="P" /></PushButton>
        <PushButton $gap={3}><BarsIcon letter="M" /></PushButton>
        <Slot><HandIcon /></Slot>
      </ToolGroup>
      <ToolGroup $w={160} $pad={6}>
        <Slot><StepIcon kind="in" /></Slot>
        <Slot><StepIcon kind="over" /></Slot>
        <Slot><StepIcon kind="out" /></Slot>
        <Dots $w={11} />
        <Slot><StepIcon kind="in" lines /></Slot>
        <Slot><StepIcon kind="over" lines /></Slot>
        <Slot><StepIcon kind="out" lines /></Slot>
      </ToolGroup>
      <ToolGroup $w={154} $pad={5}>
        <Slot><BookmarkIcon badge="add" /></Slot><Caret w={9} />
        <Slot><BookmarkIcon badge="del" /></Slot><Caret w={9} />
        <Slot><BookmarkIcon badge="edit" /></Slot>
        <Slot><BookmarkIcon badge="save" /></Slot><Caret w={9} />
        <Slot><BookmarkIcon badge="go" /></Slot>
      </ToolGroup>
      <ToolGroup $w={154} $pad={8}>
        <PushButton $down><PointerIcon /></PushButton>
        <PushButton><ZoomBoxIcon /></PushButton>
        <PushButton><PanIcon /></PushButton>
        <PushButton $gap={2}><EditWaveIcon /></PushButton>
        <Dots />
        <Slot><TrafficIcon /></Slot>
      </ToolGroup>
      <ToolGroup $w={193} $pad={5}>
        <Slot><CursorToolIcon /></Slot>
        <Slot><CursorToolIcon minus /></Slot>
        <Slot><EdgeIcon d="M0 1.500h5.500v13H16" arrow="M7 7.500l4-4v3h5v2h-5v3z" /></Slot>
        <Slot><EdgeIcon d="M0 14.500h10.500V1.500H16" arrow="M9 7.500l-4-4v3H0v2h5v3z" /></Slot>
        <Slot><EdgeIcon d="M0 1.500h5.500v13H16" arrow="M3 6h5l-2.500 4zM6 10.500l3-2.500v2h5v1H9v2z" /></Slot>
        <Slot><EdgeIcon d="M0 1.500h8.500v13H16" arrow="M6 6h5L8.500 10zM8 11.500L5 9v2H1v1h4v2z" /></Slot>
        <Slot><EdgeIcon d="M0 14.500h6.500V1.500H16" arrow="M4 8h5L6.500 4zM7 11.500l3-2.500v2h4v1h-4v2z" /></Slot>
        <Slot><EdgeIcon d="M0 14.500h10.500V1.500H16" arrow="M8 8h5l-2.500-4zM10 11.500L7 9v2H3v1h4v2z" /></Slot>
      </ToolGroup>
    </ToolRow>
    <ToolRow>
      <ToolGroup $w={402} $pad={6}>
        <Slot><MergeIcon /></Slot><Caret w={9} />
        <Slot><MergeIcon right /></Slot><Caret w={9} />
        <Slot><ExpandNetIcon /></Slot>
        <Dots $w={11} />
        <SearchLabel>Search:</SearchLabel>
        <Field $w={148} />
        <Slot $w={2} />
        <PushButton $gap={2}><Icon w={12} h={7}><path d="M0 0h12L6 7z" fill="#000" /></Icon></PushButton>
        <Slot $w={18}><FindIcon /></Slot>
        <Slot $w={18}><FindIcon next /></Slot>
        <Slot $w={26}><WrenchIcon /></Slot>
      </ToolGroup>
      <ToolGroup $w={127} $pad={6}>
        <Slot><Magnifier sign="plus" /></Slot>
        <Slot><Magnifier sign="minus" /></Slot>
        <Slot><Magnifier fill="#0f4f86" /></Slot>
        <Slot><Magnifier sign="bar" /></Slot>
        <Slot><ZoomRangeIcon /></Slot>
      </ToolGroup>
      <ToolGroup $w={194} $pad={9}>
        <PushButton $down><Icon><Px d="M0 14.500h16M8.500 1v13" c="#0a8a3a" /></Icon></PushButton>
        <PushButton><WaveShape bg="M4 0h8v16H4z" d="M1 15h4.500V2h5v13H15" /></PushButton>
        <PushButton $gap={2}>
          <Icon><path d="M0 0h16v16H0z" fill="#013f05" /><Px d="M0 14.500h2.500V2.500h4v12h3v-12h4v12H16" c="#0a9a2a" /></Icon>
        </PushButton>
        <Dots $w={11} />
        <Slot><CheckerIcon /></Slot>
        <Slot><WaveShape bg="M9 0h2v16H9z" line="M7 1v14" d="M0 15h6V1h10" /></Slot>
        <Slot><WaveShape d="M0 15h9V1h7" /></Slot>
        <Slot><WaveShape line="M9 1v14" d="M0 15h8V1h8" /></Slot>
      </ToolGroup>
    </ToolRow>
  </>
)

const NamesPane = () => (
  <Column>
    <PaneHeader>
      <HeaderIcon><ShapesIcon /><Icon w={6} h={4}><path d="M0 0h6L3 4z" fill="#000" /></Icon></HeaderIcon>
    </PaneHeader>
    <HSplit />
    <PaneBody $gutter>
      {signals.map((s) => (
        <SignalRow key={s.name} $selected={s.selected}>
          <Expander>{s.plus && <PlusBox />}</Expander>
          <SignalIcon><SignalGlyph dir={s.dir} /></SignalIcon>
          {s.process && <ProcessIcon />}
          <SignalName $indent={s.process}>{s.name}</SignalName>
        </SignalRow>
      ))}
      <InsertLine $l={2} $r={4} />
    </PaneBody>
    <HSplit />
    <Footer>
      <FooterRow $h={25}>
        <FooterIcons>
          <Icon w={12} h={14}><path d="M1 9l2-6 2 3 2-2v2l2 1v2z" fill="#555" /><path d="M0 10.500h9M1 9l-1 1.500 1 1.500" stroke="#6ab0ff" /></Icon>
          <Icon w={12} h={14}><path d="M0 2h11v7H6l-2 4V9H0z" fill="#a9c8f4" /><path d="M2 5h7M2 7h4" stroke="#fff" /></Icon>
          <Icon w={11} h={14}><circle cx="5.500" cy="7" r="4.800" fill="#45a83c" /><path d="M5.500 4.500v5M3 7h5" stroke="#fff" strokeWidth="1.600" /></Icon>
        </FooterIcons>
        <FooterCell>Now</FooterCell>
      </FooterRow>
      <FooterRow $h={20} $light>
        <FooterIcons>
          <Icon w={13} h={14}><path d="M3.500 6V4a2.500 2.500 0 015 0" stroke="#ddd" strokeWidth="1.500" /><path d="M2 6h10v7H2z" fill="#f3b73c" /><path d="M7 8v3" stroke="#7a5200" /></Icon>
          <Icon w={12} h={14}><path d="M2 13l6-7" stroke="#6aa2e8" strokeWidth="3" /><path d="M7 6l1-4M8 6l4-1" stroke="#dde" strokeWidth="2" /></Icon>
          <Icon w={11} h={14}><circle cx="6" cy="7" r="4.900" fill="#e8403c" /><path d="M3.500 7h5" stroke="#fff" strokeWidth="1.800" /></Icon>
        </FooterIcons>
        <FooterCell $light>Cursor 1</FooterCell>
      </FooterRow>
    </Footer>
    <HSplit />
    <ScrollStrip $l={9}>
      <ScrollButton><Tri dir="left" c="#909090" /></ScrollButton>
      <Trough />
      <ScrollButton><Tri dir="right" c="#909090" /></ScrollButton>
    </ScrollStrip>
  </Column>
)

const ValuesPane = () => (
  <Column>
    <PaneHeader>Msgs</PaneHeader>
    <HSplit />
    <PaneBody>
      {signals.map((s) => (
        <SignalRow key={s.name} $selected={s.selected}><SignalValue>{s.value}</SignalValue></SignalRow>
      ))}
      <InsertLine $l={2} $r={4} />
    </PaneBody>
    <HSplit />
    <Footer>
      <FooterRow $h={25}><FooterCell>5000000 ns</FooterCell></FooterRow>
      <FooterRow $h={20} $light><FooterCell $light>192270 ns</FooterCell></FooterRow>
    </Footer>
    <HSplit />
    <ScrollStrip>
      <ScrollButton><Tri dir="left" /></ScrollButton>
      <ScrollButton $w={53} />
      <Trough />
      <ScrollButton><Tri dir="right" /></ScrollButton>
    </ScrollStrip>
  </Column>
)

const WavePane = () => (
  <Column>
    <PaneHeader $dark />
    <HSplit />
    <PaneBody $dark><Waveforms /></PaneBody>
    <HSplit />
    <Footer><Timeline /></Footer>
    <HSplit />
    <ScrollStrip>
      <WaveTrough>
        <ScrollButton $w={14} $h={15}><Tri dir="left" /></ScrollButton>
        <WaveThumb />
        <ScrollButton $w={14} $h={15}><Tri dir="right" /></ScrollButton>
      </WaveTrough>
    </ScrollStrip>
    <CursorLine>
      <Crossing $top={46} $h={14} $c="#ff3a00" />
      <Crossing $top={144} $h={8} $c="#6a5cd8" />
      <Crossing $top={153} $h={7} $c="#6a5cd8" />
      <Crossing $top={166} $h={14} $c="#ff3a00" />
      {[65, 99, 185, 219, 225, 279, 285, 319, 339].map((y) => <Crossing key={y} $top={y} $h={1} $c="#e05a20" />)}
      {[24, 39, 104, 119, 124, 139, 244, 259, 344, 359, 364, 379, 384, 399, 404, 419].filter((y) => y > 160 || y < 125).map((y) => (
        <Crossing key={y} $top={y} $h={1} $c="#4a3cc0" />
      ))}
    </CursorLine>
    <Tooltip>{'sim:/uart_top_vlg_tst/i1/uart_rx_1/new_rx_data @ 192270 ns\n0'}</Tooltip>
  </Column>
)

/* ---------- taskbar icons ---------- */

const Start = () => <Icon><path d="M0 2.300L6.700 1.400v6.200H0zM7.600 1.200L16 0v7.600H7.600zM0 8.500h6.700v6.200L0 13.800zM7.600 8.500H16V16l-8.400-1.200z" fill="#fff" /></Icon>
const SearchGlyph = () => <Icon w={21} h={21}><circle cx="13" cy="8" r="6.800" stroke="#fff" strokeWidth="1.400" /><path d="M8.200 12.800L1 20" stroke="#fff" strokeWidth="1.500" /></Icon>
const TaskViewGlyph = () => <Icon w={20} h={20}><path d="M1 .5v3.500h12V.5M1 19.500V16h12v3.500M1.500 6.500h11v7h-11zM18.500 0v4M18.500 11v9" stroke="#fff" strokeWidth="1.300" /><path d="M17 6h3v3h-3z" fill="#fff" /></Icon>
const EdgeLogo = () => (
  <Icon w={26} h={26}>
    <path d="M1 12C2 4 8 0 14 0c8 0 12 6 11.500 14H9c0 5 5 7 9 7 3 0 5-1 6-2v5c-2 1-5 2-8 2C8 26 3 21 4 14c.5-3 2-5 5-6.500C4 8 2 10 1 12zm8-1.500h8.500C17.500 7 16 5 13.500 5S9.500 7 9 10.500z" fill="#0a7bd8" />
  </Icon>
)
const FolderLogo = () => (
  <Icon w={28} h={24}>
    <path d="M0 1h11l3 3v4H0z" fill="#e3a21a" /><path d="M0 4h28v19H0z" fill="#ffd766" />
    <path d="M5 24v-9q0-3 3-3h12q3 0 3 3v9h-5v-6h-8v6z" fill="#3a9ad9" />
  </Icon>
)
const LLogo = () => <Icon w={29} h={29}><circle cx="14.500" cy="14.500" r="14.200" fill="#4c8df6" /><path d="M12.500 8v11h7.500" stroke="#fff" strokeWidth="3.400" /></Icon>
const MusicLogo = () => (
  <Icon w={30} h={30}>
    <rect width="30" height="30" rx="6" fill="#dd001b" />
    <path d="M19.500 6c-3-1.500-5.500.5-5 3.500l2.200 8c.6 3.500-5 4-5 0 0-5 10-6 12 0 1 5-2.500 8-7.700 8-5.500 0-9.200-3.500-9.200-8.500 0-4 2-6.500 5.200-8" stroke="#fff" strokeWidth="2.200" strokeLinecap="round" />
  </Icon>
)
const BlueLogo = () => (
  <Icon w={30} h={30}>
    <circle cx="13.500" cy="13.500" r="13.500" fill="#5fb8e4" />
    <path d="M6 3c8-4 18 2 19 12l-2 4C20 10 13 5 6 3z" fill="#8ccdec" />
    <path d="M0 10c9-1 17 5 20 14l-7 1C8 21 3 16 0 10z" fill="#fff" /><path d="M1 16c3 5 8 8 13 9l6 1c-8 3-17-1-19-10z" fill="#1a78b4" />
    <path d="M18 14l11 2v8l-4 3-9-2z" fill="#0f5f98" />
  </Icon>
)
const ModelSimLogo = () => (
  <Icon w={30} h={30}>
    <rect x=".7" y=".7" width="28.600" height="5.600" fill="#0a10f0" stroke="#fff" strokeWidth="1.400" />
    <path d="M2 9.500h8l5 8 5-8h8v20h-7V20l-6 7-6-7v9.500H2z" fill="#000" stroke="#d8d8d8" strokeWidth="1.500" />
  </Icon>
)
const ChromeLogo = () => (
  <Icon w={28} h={28}>
    <circle cx="14" cy="14" r="14" fill="#fdcb3c" />
    <path d="M14 14L2 6.800A14 14 0 0126 7H14z" fill="#df4a3c" />
    <path d="M1.900 6.800L8 17.500l6 3.500-1.500 7A14 14 0 011.900 6.800z" fill="#1ea261" />
    <circle cx="14" cy="14" r="6.400" fill="#f1f1f1" /><circle cx="14" cy="14" r="5" fill="#4688f1" />
  </Icon>
)
const Avatar = () => (
  <Icon w={30} h={30}>
    <circle cx="15" cy="15" r="15" fill="#141518" />
    <path d="M11 7c4-3 8-1 9 3l-2 5-3 2-3-4z" fill="#d8b090" /><path d="M9 8c3-4 9-4 11 0l-5-1-3 4-1 6-3-2z" fill="#3a2420" />
    <path d="M20 11c2-4 9-2 9 3s-5 7-8 5-3-5-1-8z" fill="#c4606a" />
    <path d="M12 29l2-10 2-3 4 6 1 7q-5 2-9 0z" fill="#ead8b0" /><path d="M3 10c3-6 8-9 13-7l-7 6-1 10-5 2z" fill="#26353c" />
  </Icon>
)
const PowerPlug = () => <Icon w={13} h={22}><path d="M0 5h13v5q-1 4-5 4.500V22H5v-7.500Q1 14 0 10zM2.500 0h2v6h-2zM8.500 0h2v6h-2z" fill="#fff" /></Icon>

const BatteryBadge = styled.div`
  position: relative;
  width: 41px;
  height: 22px;
  border: 2px solid #fff;
  border-radius: 2px;
  background: #1b9b48;
  box-shadow: inset 0 0 0 1px #1c3a26;
  color: #fff;
  font: 12.5px/18px ${SEGOE};
  letter-spacing: -0.4px;
  text-align: center;

  &::before {
    content: '';
    position: absolute;
    right: -5px;
    top: 5px;
    width: 3px;
    height: 9px;
    background: #fff;
  }

  &::after {
    content: '';
    position: absolute;
    right: -5px;
    top: -6px;
    width: 11px;
    height: 11px;
    border-radius: 50%;
    background: #ea6b66;
  }
`

const TaskbarView = () => (
  <Taskbar>
    <TaskSide>
      <TaskButton $w={59}><TaskIcon><Start /></TaskIcon></TaskButton>
      <TaskButton><TaskIcon><SearchGlyph /></TaskIcon></TaskButton>
      <TaskButton><TaskIcon><TaskViewGlyph /></TaskIcon></TaskButton>
      <Divider />
      <TaskButton><TaskIcon><EdgeLogo /></TaskIcon></TaskButton>
      <TaskButton><TaskIcon><FolderLogo /></TaskIcon><Running $stack /></TaskButton>
      <TaskButton><TaskIcon><LLogo /></TaskIcon></TaskButton>
      <TaskButton><TaskIcon><MusicLogo /></TaskIcon><Running /></TaskButton>
      <TaskButton><TaskIcon><BlueLogo /></TaskIcon><Running $stack /></TaskButton>
      <TaskButton $active><TaskIcon><ModelSimLogo /></TaskIcon><Running $stack /></TaskButton>
      <TaskButton><TaskIcon><ChromeLogo /></TaskIcon><Running /></TaskButton>
      <TaskButton><TaskIcon><Avatar /></TaskIcon><Running /></TaskButton>
    </TaskSide>
    <TaskSide>
      <TrayIcon $w={13}><PowerPlug /></TrayIcon>
      <BatterySlot $w={51}><BatteryBadge>100%</BatteryBadge></BatterySlot>
      <TrayIcon $w={22}><Icon w={12} h={8}><path d="M.5 7L6 1.500 11.500 7" stroke="#fff" strokeWidth="1.500" /></Icon></TrayIcon>
      <TrayIcon $w={38}>
        <Icon w={20} h={20}>
          <path d="M11 3.500H1v14h9M1 6.500h14v4" stroke="#fff" strokeWidth="2" />
          <circle cx="16" cy="3" r="3" fill="#ff2a2a" /><circle cx="15" cy="15" r="4.300" fill="#fff" /><path d="M12.500 15h5" stroke="#333" strokeWidth="1.500" />
        </Icon>
      </TrayIcon>
      <TrayIcon $w={22}>
        <Icon w={17} h={19}>
          <ellipse cx="8.500" cy="7" rx="5" ry="6.500" fill="#050505" /><ellipse cx="8.500" cy="12" rx="6" ry="6" fill="#050505" /><path d="M1 12l2-3 1 6-3 1zM16 12l-2-3-1 6 3 1z" fill="#050505" />
          <ellipse cx="8.500" cy="13.500" rx="4.200" ry="4.300" fill="#fff" /><circle cx="7" cy="4" r="1.200" fill="#fff" /><circle cx="10" cy="4" r="1.200" fill="#fff" />
          <path d="M5.500 6.200h6l-3 1.500z" fill="#f9b800" /><path d="M2.500 8c4 2 8 2 12 0v2.500c-3 1-5 1.500-7 1.200V14H5v-3z" fill="#e81c1c" />
          <path d="M2 17.500h5V19H2zM10 17.500h5V19h-5z" fill="#f9a800" />
        </Icon>
      </TrayIcon>
      <TrayIcon $w={38}>
        <Icon w={20} h={15}>
          <path d="M5.500 4.500h12v9h-12V8M19 7v4" stroke="#fff" strokeWidth="1.500" /><path d="M7 6h9v6H7z" fill="#fff" />
          <path d="M1 2h5v2.500Q5 6 3.500 6 2 6 1 4.500zM2 0v2M5 0v2M3.500 6v4" stroke="#fff" />
        </Icon>
      </TrayIcon>
      <TrayIcon $w={24}>
        <Icon w={16} h={16}>
          <path d="M1 15A14 14 0 0115 1" stroke="#aaa" strokeWidth="1.200" /><path d="M4.500 15A10.500 10.500 0 0115 4.500M8 15a7 7 0 017-7M11 15a4 4 0 014-4" stroke="#fff" strokeWidth="1.300" />
          <circle cx="14" cy="14" r="1.500" fill="#fff" />
        </Icon>
      </TrayIcon>
      <TrayIcon $w={32}>
        <Icon w={20} h={16}>
          <path d="M.7 5.500H3.500L7 2v12L3.500 10.500H.7z" stroke="#fff" strokeWidth="1.200" /><path d="M10 6q1.500 2 0 4M12.500 4q3 4 0 8" stroke="#fff" strokeWidth="1.200" /><path d="M15.500 2q5 6 0 12" stroke="#888" strokeWidth="1.200" />
        </Icon>
      </TrayIcon>
      <ImeLabel $w={26}>英</ImeLabel>
      <Clock>0:18<br />2020/8/17</Clock>
      <TrayIcon $w={50}>
        <Icon w={20} h={20}><path d="M.7.700h18.600v15.600H12l-2.500 2.500L7 16.300H.7z" stroke="#fff" strokeWidth="1.300" /></Icon>
      </TrayIcon>
      <ShowDesktop />
    </TaskSide>
  </Taskbar>
)

export default function App() {
  return (
    <Desktop>
      <GlobalStyle />
      <WindowFrame>
        <TitleBar>
          <AppLogo />
          <TitleText>Wave</TitleText>
          <CaptionButtons>
            <Icon w={10} h={10}><Px d="M0 5.500h10" /></Icon>
            <Icon w={10} h={10}><Px d="M.5.500h9v9h-9z" /></Icon>
            <Icon w={10} h={10}><path d="M0 0l10 10M10 0L0 10" stroke="#000" /></Icon>
          </CaptionButtons>
        </TitleBar>
        <MenuBar>
          {menu.map(([label, w]) => <MenuItem key={label} $w={w}>{label}</MenuItem>)}
        </MenuBar>
        <DockBar>
          <AppLogo s={14} />
          <DockTitle>Wave - Default</DockTitle>
          <DockRail $w={870} />
          <DockGrip />
          <DockRail $w={868} />
          <DockButtons>
            <MiniButton><Icon w={8} h={8}><path d="M0 4h8M4 0v8M1.500 1.500l5 5M6.500 1.500l-5 5" stroke="#000" strokeDasharray="1 1" /></Icon></MiniButton>
            <MiniButton><Icon w={8} h={8}><path d="M7 0L2 5M1 2v5h5" stroke="#000" strokeWidth="1.500" /></Icon></MiniButton>
            <MiniButton><Icon w={8} h={8}><path d="M1 1l6 6M7 1L1 7" stroke="#000" strokeWidth="1.500" /></Icon></MiniButton>
          </DockButtons>
        </DockBar>
        <Toolbars />
        <Panes>
          <NamesPane />
          <VSplit />
          <ValuesPane />
          <VSplit />
          <WavePane />
          <VSplit />
          <Column>
            <SideBlock $h={18} />
            <HSplit />
            <SideScroll>
              <ScrollButton $w={14} $h={15}><Tri dir="up" /></ScrollButton>
              <SideThumb />
              <ScrollButton $w={14} $h={15}><Tri dir="down" /></ScrollButton>
            </SideScroll>
            <HSplit />
            <SideBlock $h={45} />
            <HSplit />
            <SideBlock $h={23} />
          </Column>
        </Panes>
        <StatusBar>
          <StatusCell $w={195} $track={-0.3}>129945 ns to 283077 ns</StatusCell>
          <StatusCell $w={1704} $track={0.07}>/uart_top_vlg_tst/i1/uart_rx_1/new_rx_data</StatusCell>
        </StatusBar>
        <FrameEdge />
      </WindowFrame>
      <Backdrop>
        <Explorer>
          <ExplorerFile><FileFolder />电机套件实验</ExplorerFile>
          <ExplorerStatus>8 个项目</ExplorerStatus>
          <ViewSwitch $right={27} $w={28} $on />
          <ViewSwitch $right={4} $w={18} />
        </Explorer>
      </Backdrop>
      <TaskbarView />
      <Subtitle>朋友阿</Subtitle>
    </Desktop>
  )
}
